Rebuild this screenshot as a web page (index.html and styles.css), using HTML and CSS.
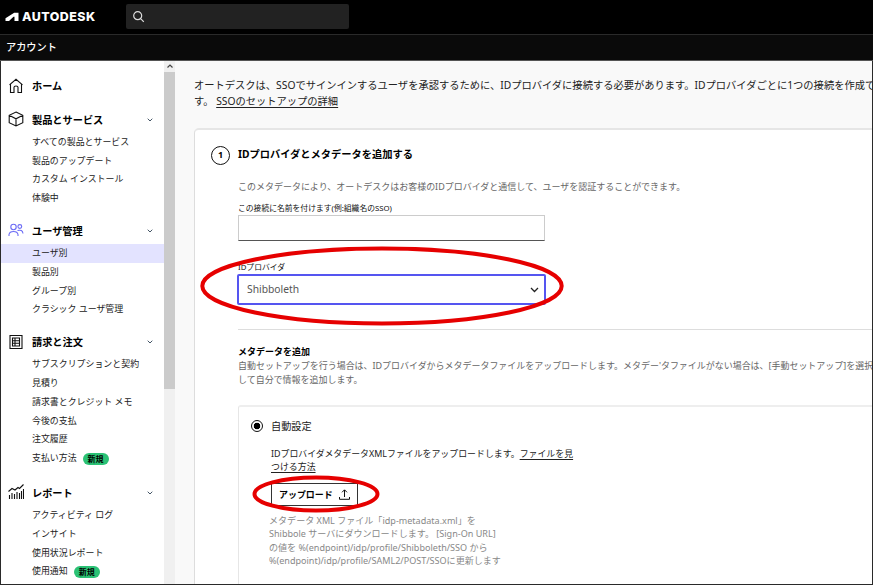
FILE: index.html
```html
<!DOCTYPE html>
<html lang="ja">
<head>
  <meta charset="UTF-8">
  <meta name="viewport" content="width=device-width, initial-scale=1.0">
  <title>Autodesk アカウント</title>
  <link rel="stylesheet" href="styles.css">
</head>
<body>
  <header class="topbar">
    <div class="logo">
      <svg width="14" height="10" viewBox="0 0 14 10"><path d="M.500 9V6.300L9.200.800H13.500V9H9.500V4.800H8.500L4 9Z" fill="#fff"/></svg>
      <span>AUTODESK</span>
    </div>
    <div class="search">
      <svg width="12" height="12" viewBox="0 0 12 12" fill="none" stroke="#ddd" stroke-width="1.200"><circle cx="4.700" cy="4.700" r="4"/><path d="M7.600 7.600L10.800 10.800"/></svg>
    </div>
  </header>
  <div class="subbar">アカウント</div>

  <div class="page">
    <nav class="sidebar">
      <div class="nav-head">
        <svg class="icon" viewBox="0 0 16 16"><path d="M1.500 6.800L8 1.300L14.500 6.800M2.500 6V14.500H6V9.200Q6 8 8 8T10 9.200V14.500H13.500V6"/></svg>
        <span>ホーム</span>
      </div>

      <div class="nav-head">
        <svg class="icon" viewBox="0 0 16 16"><path d="M8 1L14.800 4.300V11.700L8 15L1.200 11.700V4.300ZM1.200 4.300L8 7.800L14.800 4.300M8 7.800V15"/></svg>
        <span>製品とサービス</span>
        <svg class="chevron" viewBox="0 0 6 4"><path d="M.700.700L3 3L5.300.700"/></svg>
      </div>
      <ul>
        <li>すべての製品とサービス</li>
        <li>製品のアップデート</li>
        <li>カスタム インストール</li>
        <li>体験中</li>
      </ul>

      <div class="nav-head">
        <svg class="icon users" viewBox="0 0 16 16"><circle cx="5.500" cy="5" r="2.700"/><path d="M1 14V12.500Q1.500 9.500 5.500 9.500T10 12.500V14"/><circle cx="11.800" cy="4.500" r="1.900"/><path d="M9.500 8.600Q14.500 7 15 11.500"/></svg>
        <span>ユーザ管理</span>
        <svg class="chevron" viewBox="0 0 6 4"><path d="M.700.700L3 3L5.300.700"/></svg>
      </div>
      <ul>
        <li class="active">ユーザ別</li>
        <li>製品別</li>
        <li>グループ別</li>
        <li>クラシック ユーザ管理</li>
      </ul>

      <div class="nav-head">
        <svg class="icon" viewBox="0 0 16 16"><path d="M2 1.500H14V14.500H2ZM4.500 4H11.500V12H4.500ZM7 4V12M4.500 6.700H11.500M4.500 9.300H11.500"/></svg>
        <span>請求と注文</span>
        <svg class="chevron" viewBox="0 0 6 4"><path d="M.700.700L3 3L5.300.700"/></svg>
      </div>
      <ul>
        <li>サブスクリプションと契約</li>
        <li>見積り</li>
        <li>請求書とクレジット メモ</li>
        <li>今後の支払</li>
        <li>注文履歴</li>
        <li>支払い方法<span class="badge">新規</span></li>
      </ul>

      <div class="nav-head reports">
        <svg class="icon" viewBox="0 0 16 16"><path d="M.500 7.500L4 4.500L7 6L10 3.500L11.500 4.500L15.500.500"/><path d="M1.500 15V11M4 15V9M6.500 15V10M9 15V8M11.500 15V9M13.500 15V7M15.500 15V5"/></svg>
        <span>レポート</span>
        <svg class="chevron" viewBox="0 0 6 4"><path d="M.700.700L3 3L5.300.700"/></svg>
      </div>
      <ul>
        <li>アクティビティ ログ</li>
        <li>インサイト</li>
        <li>使用状況レポート</li>
        <li>使用通知<span class="badge">新規</span></li>
      </ul>
    </nav>

    <div class="scrollbar">
      <svg width="6" height="4" viewBox="0 0 6 4" fill="none" stroke="#444" stroke-width="1.200"><path d="M.500 3.500L3 1L5.500 3.500"/></svg>
      <div class="thumb"></div>
    </div>

    <main class="content">
      <p class="intro">オートデスクは、SSOでサインインするユーザを承認するために、IDプロバイダに接続する必要があります。IDプロバイダごとに1つの接続を作成で<br>す。 <a href="#">SSOのセットアップの詳細</a></p>

      <section class="card">
        <div class="step">1</div>
        <div class="card-body">
          <h2>IDプロバイダとメタデータを追加する</h2>
          <p class="lead">このメタデータにより、オートデスクはお客様のIDプロバイダと通信して、ユーザを認証することができます。</p>

          <label for="connection">この接続に名前を付けます(例:組織名のSSO)</label>
          <input type="text" id="connection" class="text-input">

          <div class="provider">
            <label class="provider-label">IDプロバイダ</label>
            <div class="select">
              <span>Shibboleth</span>
              <svg width="9" height="6" viewBox="0 0 9 6" fill="none" stroke="#222" stroke-width="1.300"><path d="M1 1L4.500 4.500L8 1"/></svg>
            </div>
            <svg class="ring ring-provider" viewBox="0 0 364 80"><ellipse cx="182" cy="40" rx="179.700" ry="37.500"/></svg>
          </div>

          <hr>

          <h3>メタデータを追加</h3>
          <p class="meta">自動セットアップを行う場合は、IDプロバイダからメタデータファイルをアップロードします。メタデー'タファイルがない場合は、[手動セットアップ]を選択<br>して自分で情報を追加します。</p>

          <div class="option">
            <div class="radio"></div>
            <div class="option-body">
              <h4>自動設定</h4>
              <p class="upload-text">IDプロバイダメタデータXMLファイルをアップロードします。<a href="#">ファイルを見<br>つける方法</a></p>
              <div class="upload">
                <button class="button" type="button">アップロード
                  <svg width="11" height="11" viewBox="0 0 11 11" fill="none" stroke="#111" stroke-width="1"><path d="M5.500 8V1M3 3.300L5.500.800L8 3.300M.500 8V10.300H10.500V8"/></svg>
                </button>
                <svg class="ring ring-upload" viewBox="0 0 128 38"><ellipse cx="64" cy="19" rx="61.500" ry="16.500"/></svg>
              </div>
              <p class="hint">メタデータ XML ファイル「idp-metadata.xml」を<br>
                Shibbole サーバにダウンロードします。 [Sign-On URL]<br>
                の値を %(endpoint)/idp/profile/Shibboleth/SSO から<br>
                %(endpoint)/idp/profile/SAML2/POST/SSOに更新します</p>
            </div>
          </div>
        </div>
      </section>
    </main>
  </div>
</body>
</html>
```

FILE: styles.css
```css
* {
  box-sizing: border-box;
}
body {
  margin: 0;
  height: 585px;
  display: flex;
  flex-direction: column;
  overflow: hidden;
  font-family: "Noto Sans", "Noto Sans CJK JP", sans-serif;
  color: #222;
  white-space: nowrap;
}
p, h2, h3, h4, ul {
  margin: 0;
  padding: 0;
}
a {
  color: inherit;
  text-underline-offset: 2px;
}
.topbar {
  flex: none;
  height: 35px;
  display: flex;
  background: #000;
  border-bottom: 1px solid #2a2a2a;
}
.logo {
  width: 126px;
  height: 34px;
  padding-left: 5px;
  display: flex;
  align-items: center;
  gap: 3px;
  color: #fff;
  font: 800 12.4px/1 Inter, sans-serif;
  letter-spacing: 0.5px;
}
.search {
  width: 223px;
  height: 25px;
  margin-top: 4px;
  padding: 7px;
  border-radius: 2px;
  background: #222;
}
.search svg {
  display: block;
}
.subbar {
  flex: none;
  height: 26px;
  padding-left: 6px;
  background: #0a0a0a;
  border-bottom: 1px solid #555;
  color: #fff;
  font-size: 10.2px;
  font-weight: 500;
  line-height: 25px;
}
.page {
  flex: 1;
  min-height: 0;
  display: flex;
  border: 1px solid #2a2a2a;
  border-top: 0;
  overflow: hidden;
  background: #f9f9f9;
}
.sidebar {
  flex: none;
  width: 163px;
  padding-top: 11px;
  background: #fff;
}
.nav-head {
  height: 27px;
  display: flex;
  align-items: center;
  padding-left: 7px;
  font-size: 10.2px;
  font-weight: bold;
  color: #000;
}
.nav-head + .nav-head {
  margin-top: 6.7px;
}
ul + .nav-head {
  margin-top: 9px;
}
ul + .reports {
  margin-top: 11px;
}
.icon {
  width: 16px;
  height: 16px;
  margin-right: 8px;
  fill: none;
  stroke: #111;
  stroke-width: 1.1;
}
.users {
  stroke: #6b6bf5;
}
.chevron {
  width: 6px;
  height: 4px;
  margin: 1px 11.5px 0 auto;
  fill: none;
  stroke: #456;
}
.sidebar li {
  height: 18.8px;
  display: flex;
  align-items: center;
  padding: 0.4px 0 0 31px;
  font-size: 8.94px;
  line-height: 18.8px;
}
.sidebar .active {
  background: #e3e3ff;
}
.badge {
  width: 26px;
  height: 12px;
  margin-left: 6px;
  border-radius: 6px;
  background: #2bc275;
  color: #000;
  font-size: 8px;
  font-weight: bold;
  line-height: 12px;
  text-align: center;
}
.scrollbar {
  flex: none;
  width: 11px;
  background: #f0f0f0;
}
.scrollbar svg {
  display: block;
  margin: 3px auto 4px;
}
.thumb {
  height: 317px;
  background: #cbcbcb;
}
.content {
  flex: 1;
  min-width: 0;
  padding: 17px 0 0 19px;
}
.intro {
  font-size: 10.28px;
  line-height: 15.5px;
}
.card {
  width: 720px;
  height: 480px;
  margin-top: 19px;
  display: flex;
  padding: 16px 0 0 16px;
  border: 1px solid #ddd;
  border-top: 2px solid #e6e6e6;
  border-radius: 5px;
  background: #fff;
}
.step {
  flex: none;
  width: 19px;
  height: 19px;
  margin-right: 8px;
  border: 1.5px solid #111;
  border-radius: 50%;
  color: #000;
  font-size: 9px;
  font-weight: bold;
  line-height: 16px;
  text-align: center;
}
.card-body {
  flex: 1;
}
h2 {
  color: #000;
  font-size: 10.25px;
  line-height: 16px;
}
.lead {
  margin-top: 17px;
  color: #666;
  font-size: 8.99px;
  line-height: 16px;
}
label {
  display: block;
  height: 12px;
  margin-top: 7px;
  color: #111;
  font-size: 7.8px;
  line-height: 12px;
}
.text-input {
  display: block;
  width: 307px;
  height: 26px;
  margin-top: 1px;
  border: 1px solid #ccc;
  border-bottom: 1px solid #555;
  background: #fff;
}
.provider {
  position: relative;
  margin-top: 20px;
}
.provider-label {
  margin: 0;
}
.select {
  width: 309px;
  height: 31px;
  margin: 1px 0 0 -1px;
  padding: 0 5px 0 8px;
  display: flex;
  align-items: center;
  justify-content: space-between;
  border: 2px solid #5555f0;
  border-radius: 2px;
  color: #555;
  font-size: 10.3px;
}
.select span {
  margin-top: -1px;
}
.ring {
  position: absolute;
  fill: none;
  stroke: #e60000;
  stroke-width: 4;
}
.ring-provider {
  left: -38.5px;
  top: -15.5px;
  width: 364px;
  height: 80px;
}
hr {
  height: 1px;
  margin: 24px 0 14px;
  border: 0;
  background: #ddd;
}
h3 {
  color: #000;
  font-size: 9px;
  line-height: 15px;
}
.meta {
  color: #666;
  font-size: 8.98px;
  line-height: 13.5px;
}
.option {
  height: 240px;
  margin-top: 19px;
  padding: 12px 0 0 12px;
  display: flex;
  border: 1px solid #e6e6e6;
  border-top: 2px solid #eee;
  border-radius: 3px;
}
.radio {
  width: 12px;
  height: 12px;
  margin: 1px 8px 0 0;
  border: 1px solid #111;
  border-radius: 50%;
  background: radial-gradient(circle, #000 3px, #fff 3.6px);
}
h4 {
  font-size: 10.2px;
  font-weight: normal;
  line-height: 14px;
}
.upload-text {
  margin-top: 14px;
  font-size: 8.91px;
  line-height: 13.3px;
}
.upload {
  position: relative;
  margin-top: 9px;
}
.button {
  width: 87px;
  height: 23px;
  padding: 0 7px;
  display: flex;
  align-items: center;
  justify-content: space-between;
  border: 1px solid #333;
  background: #fff;
  color: #000;
  font-family: inherit;
  font-size: 8.95px;
  font-weight: bold;
}
.ring-upload {
  left: -19.5px;
  top: -7.5px;
  width: 128px;
  height: 38px;
}
.hint {
  margin: 8.5px 0 0 -2px;
  color: #888;
  font-size: 9.06px;
  line-height: 13.2px;
}
```
